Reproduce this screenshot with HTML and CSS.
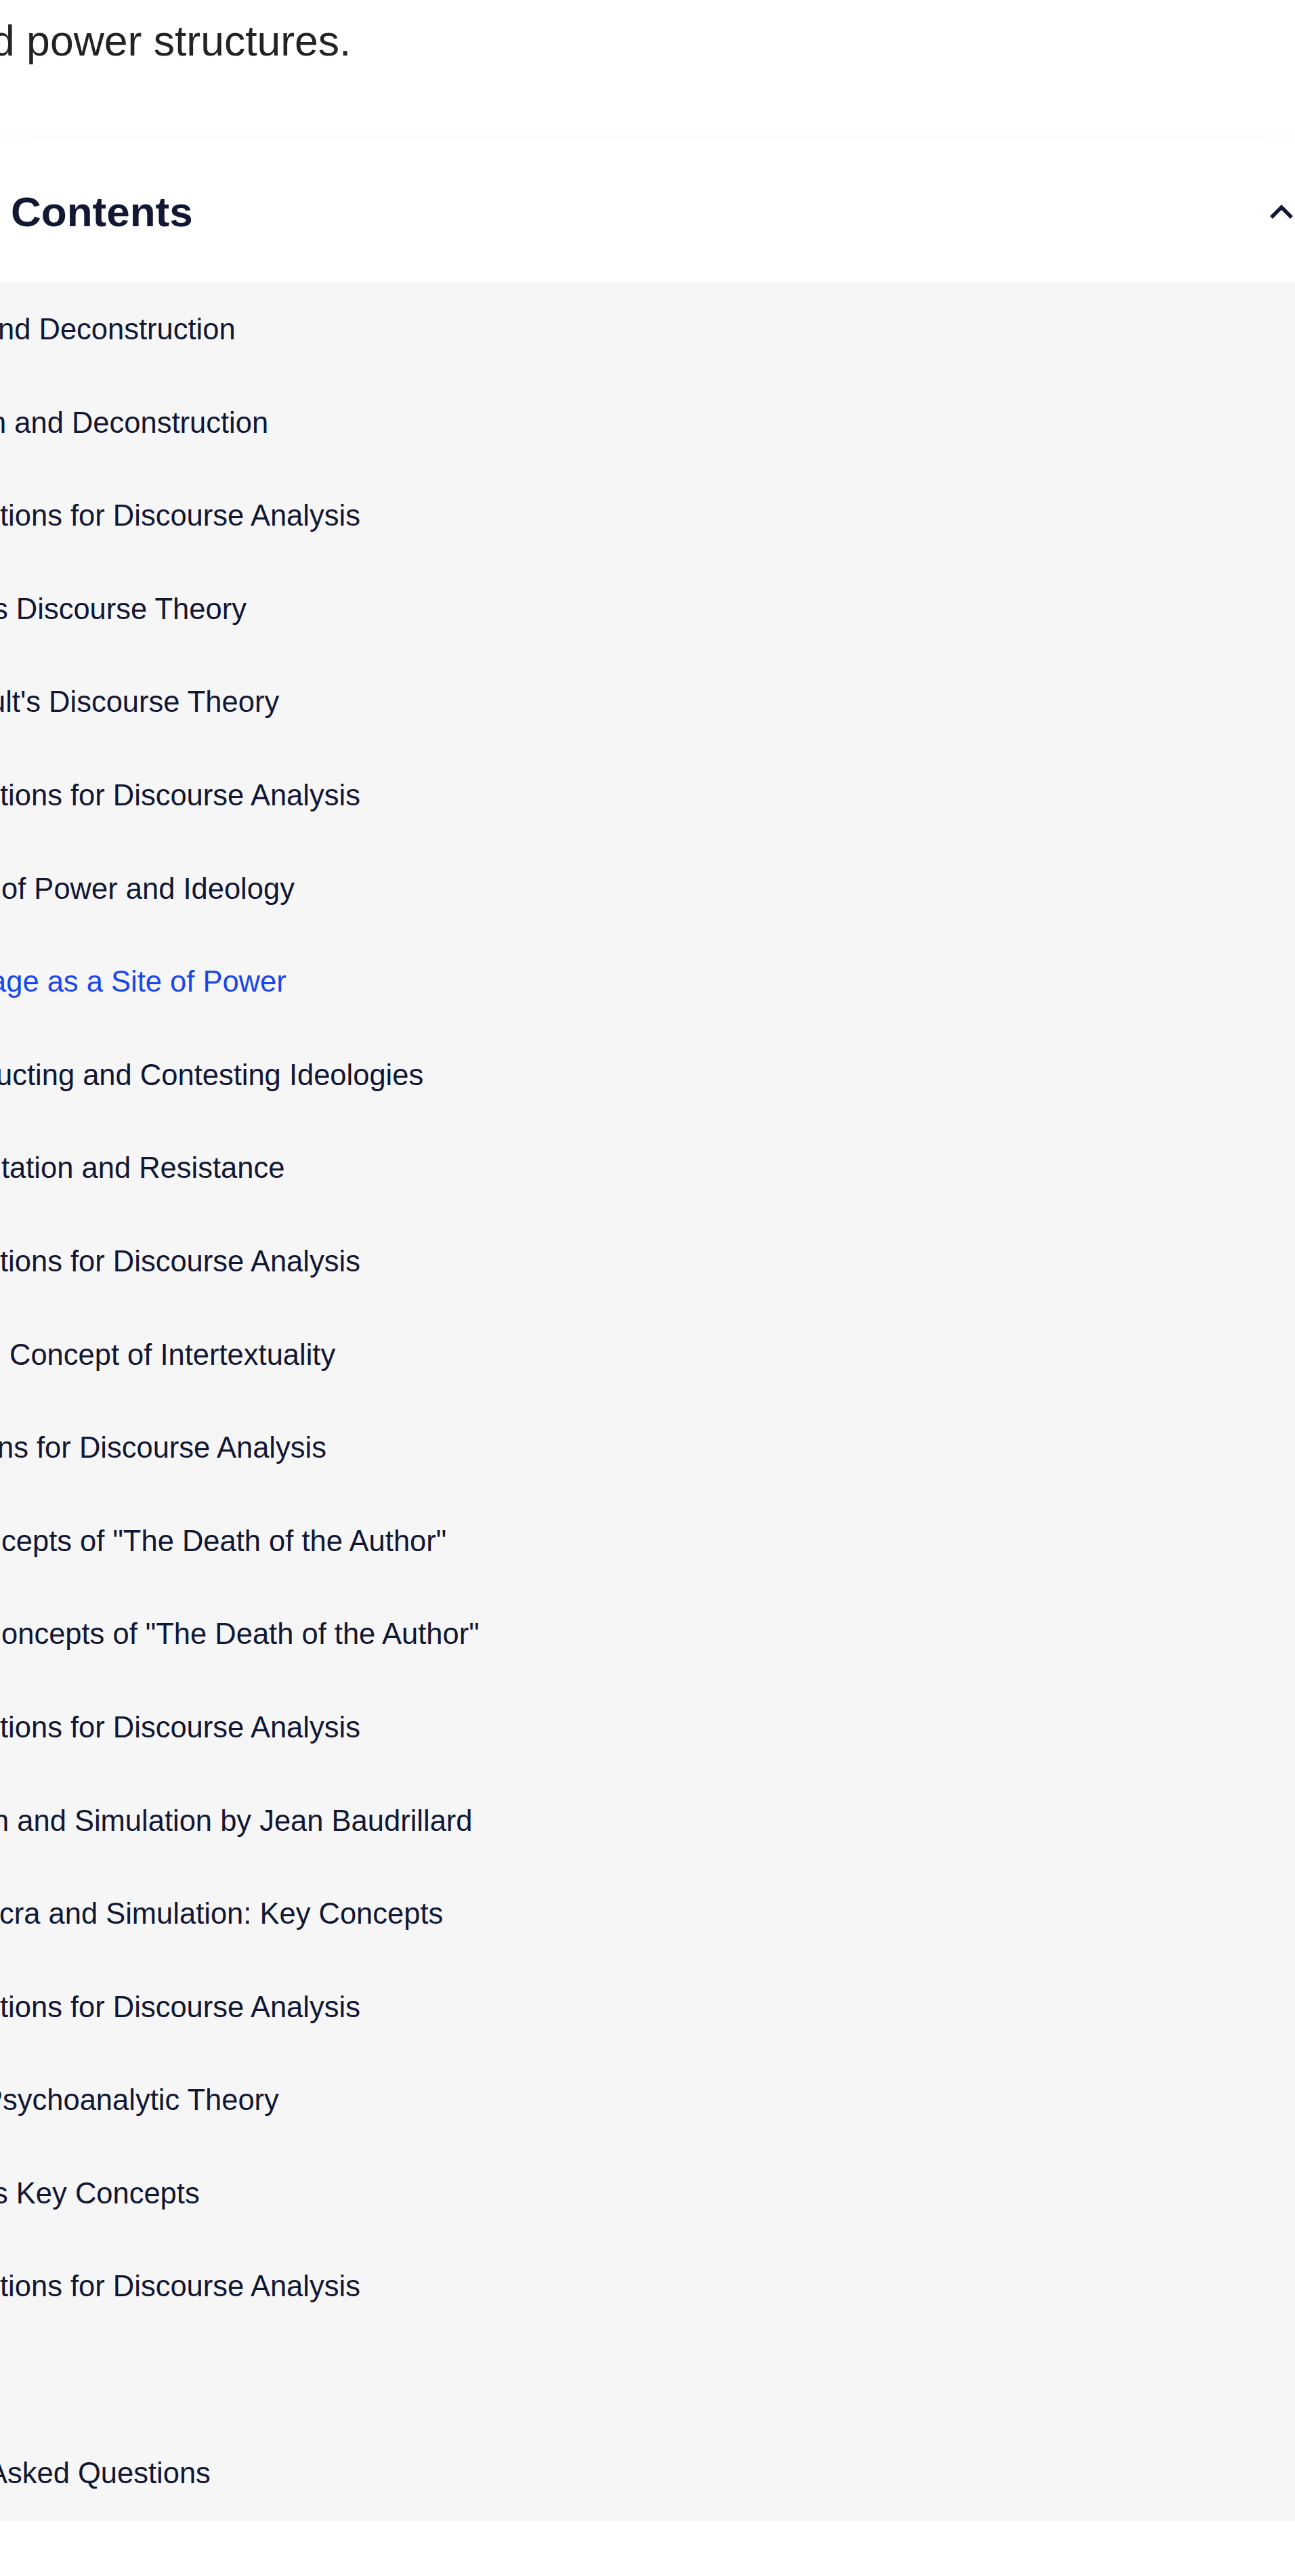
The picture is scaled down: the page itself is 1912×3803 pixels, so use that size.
FILE: index.html
```html
<!DOCTYPE html>
<html lang="en">
<head>
<meta charset="utf-8">
<title>Table of Contents</title>
<link rel="stylesheet" href="styles.css">
</head>
<body>
<main class="article">
  <p class="lead-tail">d power structures.</p>
  <section class="toc">
    <header class="toc-head">
      <h2 class="toc-title">Contents</h2>
      <button class="toc-toggle" type="button" aria-label="Collapse table of contents">
        <svg width="36" height="24" viewBox="0 0 36 24" aria-hidden="true">
          <polyline points="3,20 18,5 33,20" fill="none" stroke="currentColor" stroke-width="5.5" stroke-linejoin="miter"/>
        </svg>
      </button>
    </header>
    <ol class="toc-list">
      <li class="toc-item cut-3">nd Deconstruction</li>
      <li class="toc-item cut-15">n and Deconstruction</li>
      <li class="toc-item">tions for Discourse Analysis</li>
      <li class="toc-item cut-10">s Discourse Theory</li>
      <li class="toc-item cut-16">ult's Discourse Theory</li>
      <li class="toc-item">tions for Discourse Analysis</li>
      <li class="toc-item push-2">of Power and Ideology</li>
      <li class="toc-item cut-15 is-active">age as a Site of Power</li>
      <li class="toc-item cut-6">ucting and Contesting Ideologies</li>
      <li class="toc-item push-2">tation and Resistance</li>
      <li class="toc-item">tions for Discourse Analysis</li>
      <li class="toc-item push-14">Concept of Intertextuality</li>
      <li class="toc-item cut-4">ns for Discourse Analysis</li>
      <li class="toc-item push-2">cepts of "The Death of the Author"</li>
      <li class="toc-item push-2">oncepts of "The Death of the Author"</li>
      <li class="toc-item">tions for Discourse Analysis</li>
      <li class="toc-item cut-11">n and Simulation by Jean Baudrillard</li>
      <li class="toc-item cut-1">cra and Simulation: Key Concepts</li>
      <li class="toc-item">tions for Discourse Analysis</li>
      <li class="toc-item cut-25">Psychoanalytic Theory</li>
      <li class="toc-item cut-10">s Key Concepts</li>
      <li class="toc-item">tions for Discourse Analysis</li>
      <li class="toc-item toc-item--offscreen">&nbsp;</li>
      <li class="toc-item cut-18">Asked Questions</li>
    </ol>
  </section>
</main>
</body>
</html>
```

FILE: styles.css
```css
html, body {
  margin: 0;
  padding: 0;
  background: #ffffff;
}

body {
  font-family: "Liberation Sans", Arial, sans-serif;
  overflow: hidden;
}

.article {
  width: 100%;
}

.lead-tail {
  margin: 10px 0 0;
  font-size: 62.5px;
  line-height: 100px;
  color: #232323;
  text-indent: -13px;
  white-space: nowrap;
}

.toc {
  margin-top: 98px;
  background: #ffffff;
  box-shadow: 0 12px 40px rgba(0, 0, 0, 0.05);
}

.toc-head {
  display: flex;
  align-items: center;
  justify-content: space-between;
  height: 209px;
  padding: 0 2px 0 16px;
  box-sizing: border-box;
  background: #ffffff;
}

.toc-title {
  margin: 0;
  font-size: 62px;
  line-height: 62px;
  font-weight: 700;
  color: #121733;
}

.toc-toggle {
  display: flex;
  padding: 0;
  margin: 0;
  border: 0;
  background: none;
  color: #121733;
  cursor: pointer;
}

.toc-list {
  list-style: none;
  margin: 0;
  padding: 0 0 3px;
  background: #f6f6f7;
}

.toc-item {
  font-size: 43.5px;
  line-height: 65.6px;
  padding: 37px 0 35px;
  color: #121733;
  white-space: nowrap;
}

.toc-item.is-active {
  color: #1a46ec;
}

.cut-1 { text-indent: -1px; }
.cut-3 { text-indent: -3px; }
.cut-4 { text-indent: -4px; }
.cut-6 { text-indent: -6px; }
.cut-10 { text-indent: -10px; }
.cut-11 { text-indent: -11px; }
.cut-15 { text-indent: -15px; }
.cut-16 { text-indent: -16px; }
.cut-18 { text-indent: -18px; }
.cut-25 { text-indent: -25px; }
.push-2 { text-indent: 2px; }
.push-14 { text-indent: 14px; }
```
